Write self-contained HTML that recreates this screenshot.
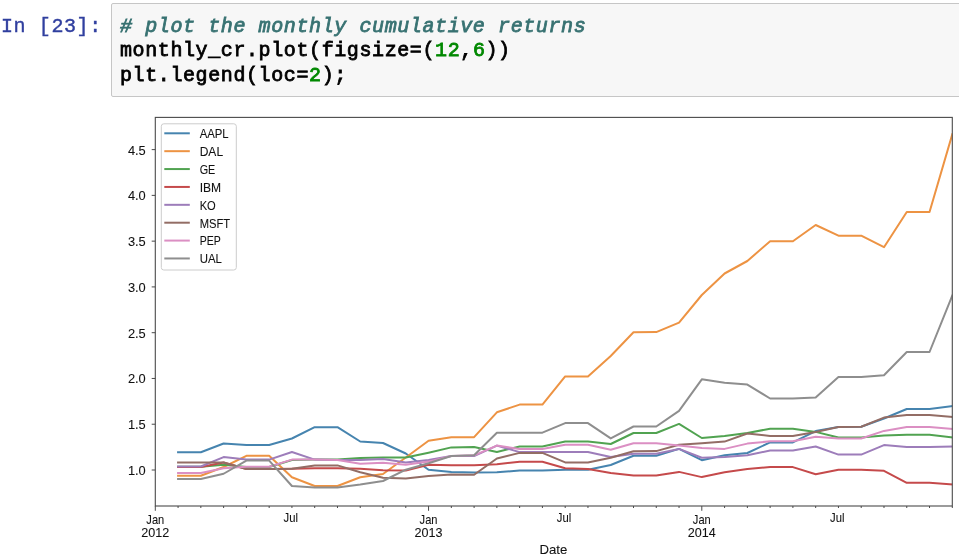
<!DOCTYPE html>
<html><head><meta charset="utf-8">
<style>
html,body{margin:0;padding:0;background:#fff;width:959px;height:558px;overflow:hidden;position:relative}
.wrap{position:absolute;left:0;top:0;width:959px;height:558px;will-change:transform}
.prompt{position:absolute;left:1px;top:0;font-family:"Liberation Mono",monospace;font-size:20px;letter-spacing:0.6px;color:#303f9f;-webkit-text-stroke:0.4px currentColor;line-height:24.5px;white-space:pre}
.cell{position:absolute;left:110.5px;top:2.5px;width:900px;height:92px;background:#f7f7f7;border:1px solid #c6c6c6;border-radius:2px}
.code{position:absolute;left:120px;top:0;font-family:"Liberation Mono",monospace;font-size:20px;letter-spacing:0.6px;font-weight:normal;-webkit-text-stroke:0.8px currentColor;color:#000;line-height:24.5px;white-space:pre}
.cm{color:#387272;font-style:italic}
.nu{color:#080}
</style></head><body><div class="wrap">
<div class="cell"></div>
<div class="prompt" style="top:15px">In [23]:</div>
<div class="code" style="top:14.7px"><span class="cm"># plot the monthly cumulative returns</span>
monthly_cr.plot(figsize=(<span class="nu">12</span>,<span class="nu">6</span>))
plt.legend(loc=<span class="nu">2</span>);</div>
<svg width="959" height="558" viewBox="0 0 959 558" style="position:absolute;left:0;top:0">
<defs><clipPath id="ax"><rect x="155.3" y="117.4" width="797.0" height="388.6"/></clipPath></defs>
<g clip-path="url(#ax)"><g fill="none" stroke-width="2.0" stroke-linejoin="round" stroke-linecap="square">
<polyline stroke="#4684af" points="178.07,452.30 200.84,452.30 223.61,443.50 246.39,445.00 269.16,445.00 291.93,438.50 314.70,427.20 337.47,427.20 360.24,441.50 383.01,443.00 405.79,453.50 428.56,469.70 451.33,472.00 474.10,472.50 496.87,472.30 519.64,470.60 542.41,470.60 565.19,469.80 587.96,469.80 610.73,465.00 633.50,455.80 656.27,455.80 679.04,448.90 701.81,460.20 724.59,455.30 747.36,453.00 770.13,442.40 792.90,442.40 815.67,431.10 838.44,427.10 861.21,426.70 883.99,418.50 906.76,409.00 929.53,409.00 952.30,406.20"/>
<polyline stroke="#ed9343" points="178.07,475.80 200.84,475.80 223.61,467.00 246.39,455.80 269.16,455.80 291.93,477.30 314.70,486.00 337.47,486.00 360.24,477.30 383.01,474.00 405.79,457.50 428.56,440.80 451.33,437.20 474.10,437.20 496.87,412.30 519.64,404.60 542.41,404.60 565.19,376.40 587.96,376.40 610.73,356.00 633.50,332.20 656.27,332.10 679.04,322.60 701.81,295.00 724.59,273.50 747.36,261.00 770.13,241.20 792.90,241.20 815.67,225.00 838.44,235.70 861.21,235.70 883.99,247.20 906.76,212.00 929.53,212.00 952.30,134.30"/>
<polyline stroke="#51a351" points="178.07,466.80 200.84,466.80 223.61,464.80 246.39,467.00 269.16,467.00 291.93,460.00 314.70,459.40 337.47,459.40 360.24,458.00 383.01,457.50 405.79,457.60 428.56,452.70 451.33,447.40 474.10,447.00 496.87,452.00 519.64,446.50 542.41,446.50 565.19,441.60 587.96,441.60 610.73,444.00 633.50,433.00 656.27,433.00 679.04,423.90 701.81,438.00 724.59,436.00 747.36,433.00 770.13,428.70 792.90,428.70 815.67,431.90 838.44,437.50 861.21,437.50 883.99,435.60 906.76,434.70 929.53,434.70 952.30,437.50"/>
<polyline stroke="#c54a4b" points="178.07,467.00 200.84,467.00 223.61,462.50 246.39,469.00 269.16,469.00 291.93,468.75 314.70,468.30 337.47,468.30 360.24,468.70 383.01,470.30 405.79,470.50 428.56,464.80 451.33,465.30 474.10,465.20 496.87,464.20 519.64,461.80 542.41,461.80 565.19,468.20 587.96,469.00 610.73,473.10 633.50,475.50 656.27,475.50 679.04,471.90 701.81,477.10 724.59,472.30 747.36,469.00 770.13,467.10 792.90,467.10 815.67,474.20 838.44,469.80 861.21,469.80 883.99,470.80 906.76,482.80 929.53,482.80 952.30,484.50"/>
<polyline stroke="#9d7dba" points="178.07,466.50 200.84,466.50 223.61,457.10 246.39,459.60 269.16,459.60 291.93,452.00 314.70,459.60 337.47,460.00 360.24,460.00 383.01,459.00 405.79,462.40 428.56,460.00 451.33,456.00 474.10,456.10 496.87,445.60 519.64,452.10 542.41,452.10 565.19,452.10 587.96,452.10 610.73,457.00 633.50,453.70 656.27,453.70 679.04,448.90 701.81,457.70 724.59,456.90 747.36,455.30 770.13,450.50 792.90,450.50 815.67,446.50 838.44,454.60 861.21,454.60 883.99,445.10 906.76,447.00 929.53,447.00 952.30,446.50"/>
<polyline stroke="#936d65" points="178.07,462.50 200.84,462.50 223.61,462.50 246.39,469.00 269.16,469.00 291.93,468.75 314.70,465.40 337.47,465.40 360.24,472.30 383.01,477.70 405.79,478.50 428.56,476.00 451.33,474.50 474.10,474.70 496.87,458.50 519.64,452.90 542.41,452.90 565.19,462.40 587.96,462.40 610.73,457.70 633.50,451.20 656.27,451.10 679.04,444.80 701.81,443.20 724.59,441.60 747.36,433.50 770.13,436.00 792.90,436.00 815.67,431.90 838.44,427.00 861.21,426.70 883.99,417.60 906.76,415.10 929.53,415.10 952.30,417.00"/>
<polyline stroke="#db8fc3" points="178.07,472.90 200.84,472.90 223.61,468.30 246.39,466.70 269.16,466.70 291.93,459.60 314.70,459.60 337.47,460.00 360.24,463.70 383.01,462.70 405.79,464.80 428.56,461.60 451.33,456.00 474.10,455.30 496.87,445.60 519.64,448.90 542.41,448.90 565.19,444.80 587.96,444.80 610.73,449.70 633.50,443.20 656.27,443.20 679.04,445.60 701.81,448.10 724.59,448.90 747.36,443.60 770.13,441.30 792.90,441.30 815.67,436.80 838.44,438.40 861.21,438.50 883.99,430.90 906.76,427.10 929.53,427.10 952.30,429.00"/>
<polyline stroke="#8e8e8e" points="178.07,479.00 200.84,479.00 223.61,473.75 246.39,460.60 269.16,460.60 291.93,486.00 314.70,487.40 337.47,487.40 360.24,484.50 383.01,481.00 405.79,469.70 428.56,463.20 451.33,456.00 474.10,455.30 496.87,432.70 519.64,432.70 542.41,432.70 565.19,423.10 587.96,423.10 610.73,438.40 633.50,426.50 656.27,426.50 679.04,410.90 701.81,379.30 724.59,382.70 747.36,384.60 770.13,398.50 792.90,398.50 815.67,397.50 838.44,377.10 861.21,377.10 883.99,375.30 906.76,352.00 929.53,352.00 952.30,295.60"/>
</g></g>
<rect x="155.3" y="117.4" width="797.0" height="388.6" fill="none" stroke="#4a4a4a" stroke-width="1.1"/>
<path d="M151.70,470.00H155.3M151.70,424.23H155.3M151.70,378.46H155.3M151.70,332.69H155.3M151.70,286.92H155.3M151.70,241.15H155.3M151.70,195.38H155.3M151.70,149.61H155.3M155.30,506.0V510.80M178.07,506.0V508.00M200.84,506.0V508.00M223.61,506.0V508.00M246.39,506.0V508.00M269.16,506.0V508.00M291.93,506.0V508.00M314.70,506.0V508.00M337.47,506.0V508.00M360.24,506.0V508.00M383.01,506.0V508.00M405.79,506.0V508.00M428.56,506.0V510.80M451.33,506.0V508.00M474.10,506.0V508.00M496.87,506.0V508.00M519.64,506.0V508.00M542.41,506.0V508.00M565.19,506.0V508.00M587.96,506.0V508.00M610.73,506.0V508.00M633.50,506.0V508.00M656.27,506.0V508.00M679.04,506.0V508.00M701.81,506.0V510.80M724.59,506.0V508.00M747.36,506.0V508.00M770.13,506.0V508.00M792.90,506.0V508.00M815.67,506.0V508.00M838.44,506.0V508.00M861.21,506.0V508.00M883.99,506.0V508.00M906.76,506.0V508.00M929.53,506.0V508.00M952.30,506.0V508.00" stroke="#4a4a4a" stroke-width="1" fill="none"/>
<g font-family="Liberation Sans, sans-serif" font-size="12.8" fill="#111" stroke="#111" stroke-width="0.08" lengthAdjust="spacingAndGlyphs">
<text x="145.8" y="475.00" text-anchor="end" textLength="17.9" lengthAdjust="spacingAndGlyphs">1.0</text>
<text x="145.8" y="429.23" text-anchor="end" textLength="17.9" lengthAdjust="spacingAndGlyphs">1.5</text>
<text x="145.8" y="383.46" text-anchor="end" textLength="17.9" lengthAdjust="spacingAndGlyphs">2.0</text>
<text x="145.8" y="337.69" text-anchor="end" textLength="17.9" lengthAdjust="spacingAndGlyphs">2.5</text>
<text x="145.8" y="291.92" text-anchor="end" textLength="17.9" lengthAdjust="spacingAndGlyphs">3.0</text>
<text x="145.8" y="246.15" text-anchor="end" textLength="17.9" lengthAdjust="spacingAndGlyphs">3.5</text>
<text x="145.8" y="200.38" text-anchor="end" textLength="17.9" lengthAdjust="spacingAndGlyphs">4.0</text>
<text x="145.8" y="154.61" text-anchor="end" textLength="17.9" lengthAdjust="spacingAndGlyphs">4.5</text>
<text x="155.30" y="524.2" text-anchor="middle" textLength="17.9" lengthAdjust="spacingAndGlyphs">Jan</text>
<text x="155.30" y="536.9" text-anchor="middle" textLength="28.0" lengthAdjust="spacingAndGlyphs">2012</text>
<text x="428.56" y="524.2" text-anchor="middle" textLength="17.9" lengthAdjust="spacingAndGlyphs">Jan</text>
<text x="428.56" y="536.9" text-anchor="middle" textLength="28.0" lengthAdjust="spacingAndGlyphs">2013</text>
<text x="701.81" y="524.2" text-anchor="middle" textLength="17.9" lengthAdjust="spacingAndGlyphs">Jan</text>
<text x="701.81" y="536.9" text-anchor="middle" textLength="28.0" lengthAdjust="spacingAndGlyphs">2014</text>
<text x="290.73" y="522.4" text-anchor="middle" textLength="14.4" lengthAdjust="spacingAndGlyphs">Jul</text>
<text x="563.99" y="522.4" text-anchor="middle" textLength="14.4" lengthAdjust="spacingAndGlyphs">Jul</text>
<text x="837.24" y="522.4" text-anchor="middle" textLength="14.4" lengthAdjust="spacingAndGlyphs">Jul</text>
<text x="553.4" y="553.8" text-anchor="middle" textLength="27.9" lengthAdjust="spacingAndGlyphs">Date</text>
</g>
<rect x="161.3" y="123.8" width="75" height="146.2" rx="2.5" fill="#fff" fill-opacity="0.8" stroke="#ccc" stroke-width="1"/>
<g font-family="Liberation Sans, sans-serif" font-size="12.6" fill="#111" stroke="#111" stroke-width="0.08">
<path d="M164.3,133.30H189.8" stroke="#4684af" stroke-width="2"/>
<text x="199.7" y="138.10" textLength="29.0" lengthAdjust="spacingAndGlyphs">AAPL</text>
<path d="M164.3,151.18H189.8" stroke="#ed9343" stroke-width="2"/>
<text x="199.7" y="155.98" textLength="23.400000000000002" lengthAdjust="spacingAndGlyphs">DAL</text>
<path d="M164.3,169.06H189.8" stroke="#51a351" stroke-width="2"/>
<text x="199.7" y="173.86" textLength="15.600000000000001" lengthAdjust="spacingAndGlyphs">GE</text>
<path d="M164.3,186.94H189.8" stroke="#c54a4b" stroke-width="2"/>
<text x="199.7" y="191.74" textLength="21.5" lengthAdjust="spacingAndGlyphs">IBM</text>
<path d="M164.3,204.82H189.8" stroke="#9d7dba" stroke-width="2"/>
<text x="199.7" y="209.62" textLength="16.1" lengthAdjust="spacingAndGlyphs">KO</text>
<path d="M164.3,222.70H189.8" stroke="#936d65" stroke-width="2"/>
<text x="199.7" y="227.50" textLength="30.5" lengthAdjust="spacingAndGlyphs">MSFT</text>
<path d="M164.3,240.58H189.8" stroke="#db8fc3" stroke-width="2"/>
<text x="199.7" y="245.38" textLength="21.1" lengthAdjust="spacingAndGlyphs">PEP</text>
<path d="M164.3,258.46H189.8" stroke="#8e8e8e" stroke-width="2"/>
<text x="199.7" y="263.26" textLength="22.2" lengthAdjust="spacingAndGlyphs">UAL</text>
</g>
</svg>
</div></body></html>
